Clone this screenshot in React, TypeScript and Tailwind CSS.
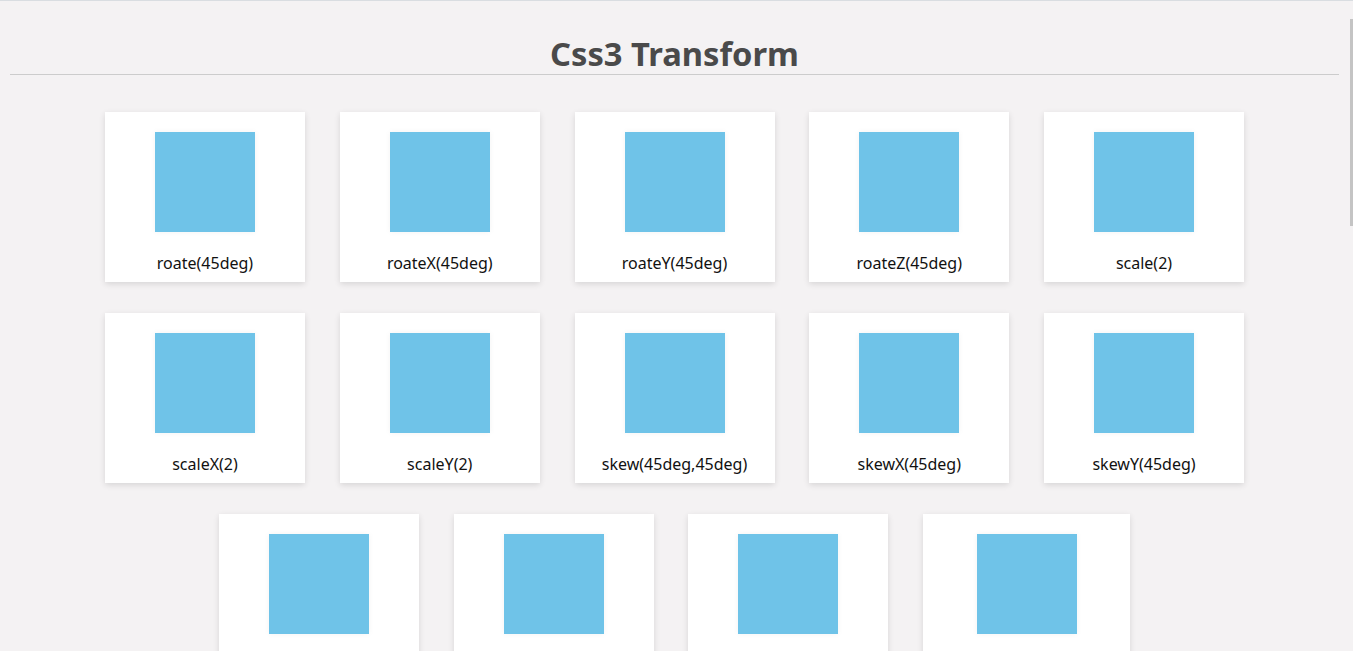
const items: { label: string; wide?: boolean }[] = [
  { label: "roate(45deg)" },
  { label: "roateX(45deg)" },
  { label: "roateY(45deg)" },
  { label: "roateZ(45deg)" },
  { label: "scale(2)" },
  { label: "scaleX(2)" },
  { label: "scaleY(2)" },
  { label: "skew(45deg,45deg)" },
  { label: "skewX(45deg)" },
  { label: "skewY(45deg)" },
  { label: "translateX(50px)" },
  { label: "translateY(50px)" },
  { label: "translate(50px,50px)" },
  { label: "matrix(1,0.5,-0.5,1,0,0)", wide: true },
];

function Card({ label, wide }: { label: string; wide?: boolean }) {
  return (
    <div
      className={`${wide ? "w-[207px]" : "w-[200px]"} h-[170px] bg-white shadow-[0_2px_6px_rgba(0,0,0,0.12)] flex flex-col items-center pt-[20px]`}
    >
      <div className="w-[100px] h-[100px] bg-[#6fc3e8] shadow-[0_0_6px_rgba(0,0,0,0.05)]" />
      <div className="mt-[19px] text-[16px] leading-[24px] text-[#111] whitespace-nowrap">{label}</div>
    </div>
  );
}

export default function App() {
  return (
    <div
      className="relative h-[651px] w-full overflow-hidden bg-[#f4f2f3] border-t border-[#d9dde1]"
      style={{ fontFamily: '"Noto Sans", "Open Sans", sans-serif' }}
    >
      <div className="w-[1339px] pl-[10px]">
        <h1 className="text-center text-[32.7px] font-bold leading-[40px] text-[#4a4a4a] pt-[33px] border-b border-[#cccccc]">
          Css3 Transform
        </h1>
        <div className="flex flex-wrap justify-center gap-x-[34.75px] gap-y-[31px] pt-[37px]">
          {items.map((it) => (
            <Card key={it.label} label={it.label} wide={it.wide} />
          ))}
        </div>
      </div>
      {/* overlay scrollbar thumb */}
      <div className="absolute right-0 top-[18px] w-[3px] h-[207px] bg-[#c4c4c4]" />
    </div>
  );
}
